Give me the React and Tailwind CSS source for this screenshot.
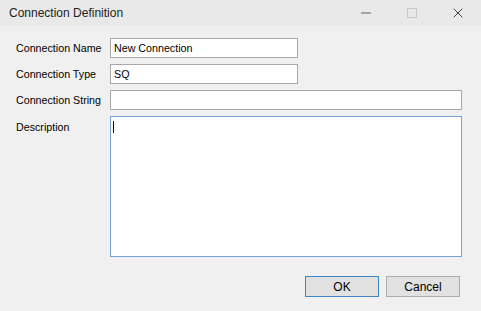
import { Minus, X } from 'lucide-react';

const font = { fontFamily: '"Segoe UI", "Liberation Sans", Arial, sans-serif' };

function Field({ label, value, wide }) {
  return (
    <div className="flex items-center h-[20px]">
      <span className="w-[94px] shrink-0 whitespace-nowrap text-[10.7px] text-black leading-none">{label}</span>
      <div
        className={`h-[20px] ${wide ? 'w-[352px]' : 'w-[188px]'} bg-white border border-[#a9a9a9] px-[3px] flex items-center text-[10.7px] text-black`}
      >
        {value}
      </div>
    </div>
  );
}

export default function App() {
  return (
    <div className="w-[481px] h-[311px] bg-[#f0f0f0] flex flex-col overflow-hidden" style={font}>
      <div className="h-[26px] bg-[#e9e9e9] flex items-center pl-[9px] shrink-0">
        <span className="text-[12px] text-[#222] flex-1">Connection Definition</span>
        <div className="flex items-center h-full">
          <div className="w-[46px] h-full flex items-center justify-center text-[#222]">
            <Minus size={16} strokeWidth={1} />
          </div>
          <div className="w-[46px] h-full flex items-center justify-center">
            <div className="w-[10px] h-[10px] border border-[#c8c8c8]" />
          </div>
          <div className="w-[46px] h-full flex items-center justify-center text-[#111]">
            <X size={16} strokeWidth={1.2} />
          </div>
        </div>
      </div>

      <div className="flex flex-col pl-[16px] pt-[12px] gap-[6px]">
        <Field label="Connection Name" value="New Connection" />
        <Field label="Connection Type" value="SQ" />
        <Field label="Connection String" value="" wide />
        <div className="flex">
          <span className="w-[94px] shrink-0 text-[10.7px] text-black pt-[6px] leading-none">Description</span>
          <div className="w-[352px] h-[141px] bg-white border border-[#7aa2d6] relative">
            <div className="absolute left-[2px] top-[4px] w-[1px] h-[12px] bg-black" />
          </div>
        </div>
      </div>

      <div className="flex justify-end gap-[7px] pr-[21px] mt-[19px]">
        <button className="w-[74px] h-[21px] bg-[#e1e1e1] border border-[#3d87c9] text-[12px] text-black flex items-center justify-center">
          OK
        </button>
        <button className="w-[74px] h-[21px] bg-[#e1e1e1] border border-[#adadad] text-[12px] text-black flex items-center justify-center">
          Cancel
        </button>
      </div>
    </div>
  );
}
